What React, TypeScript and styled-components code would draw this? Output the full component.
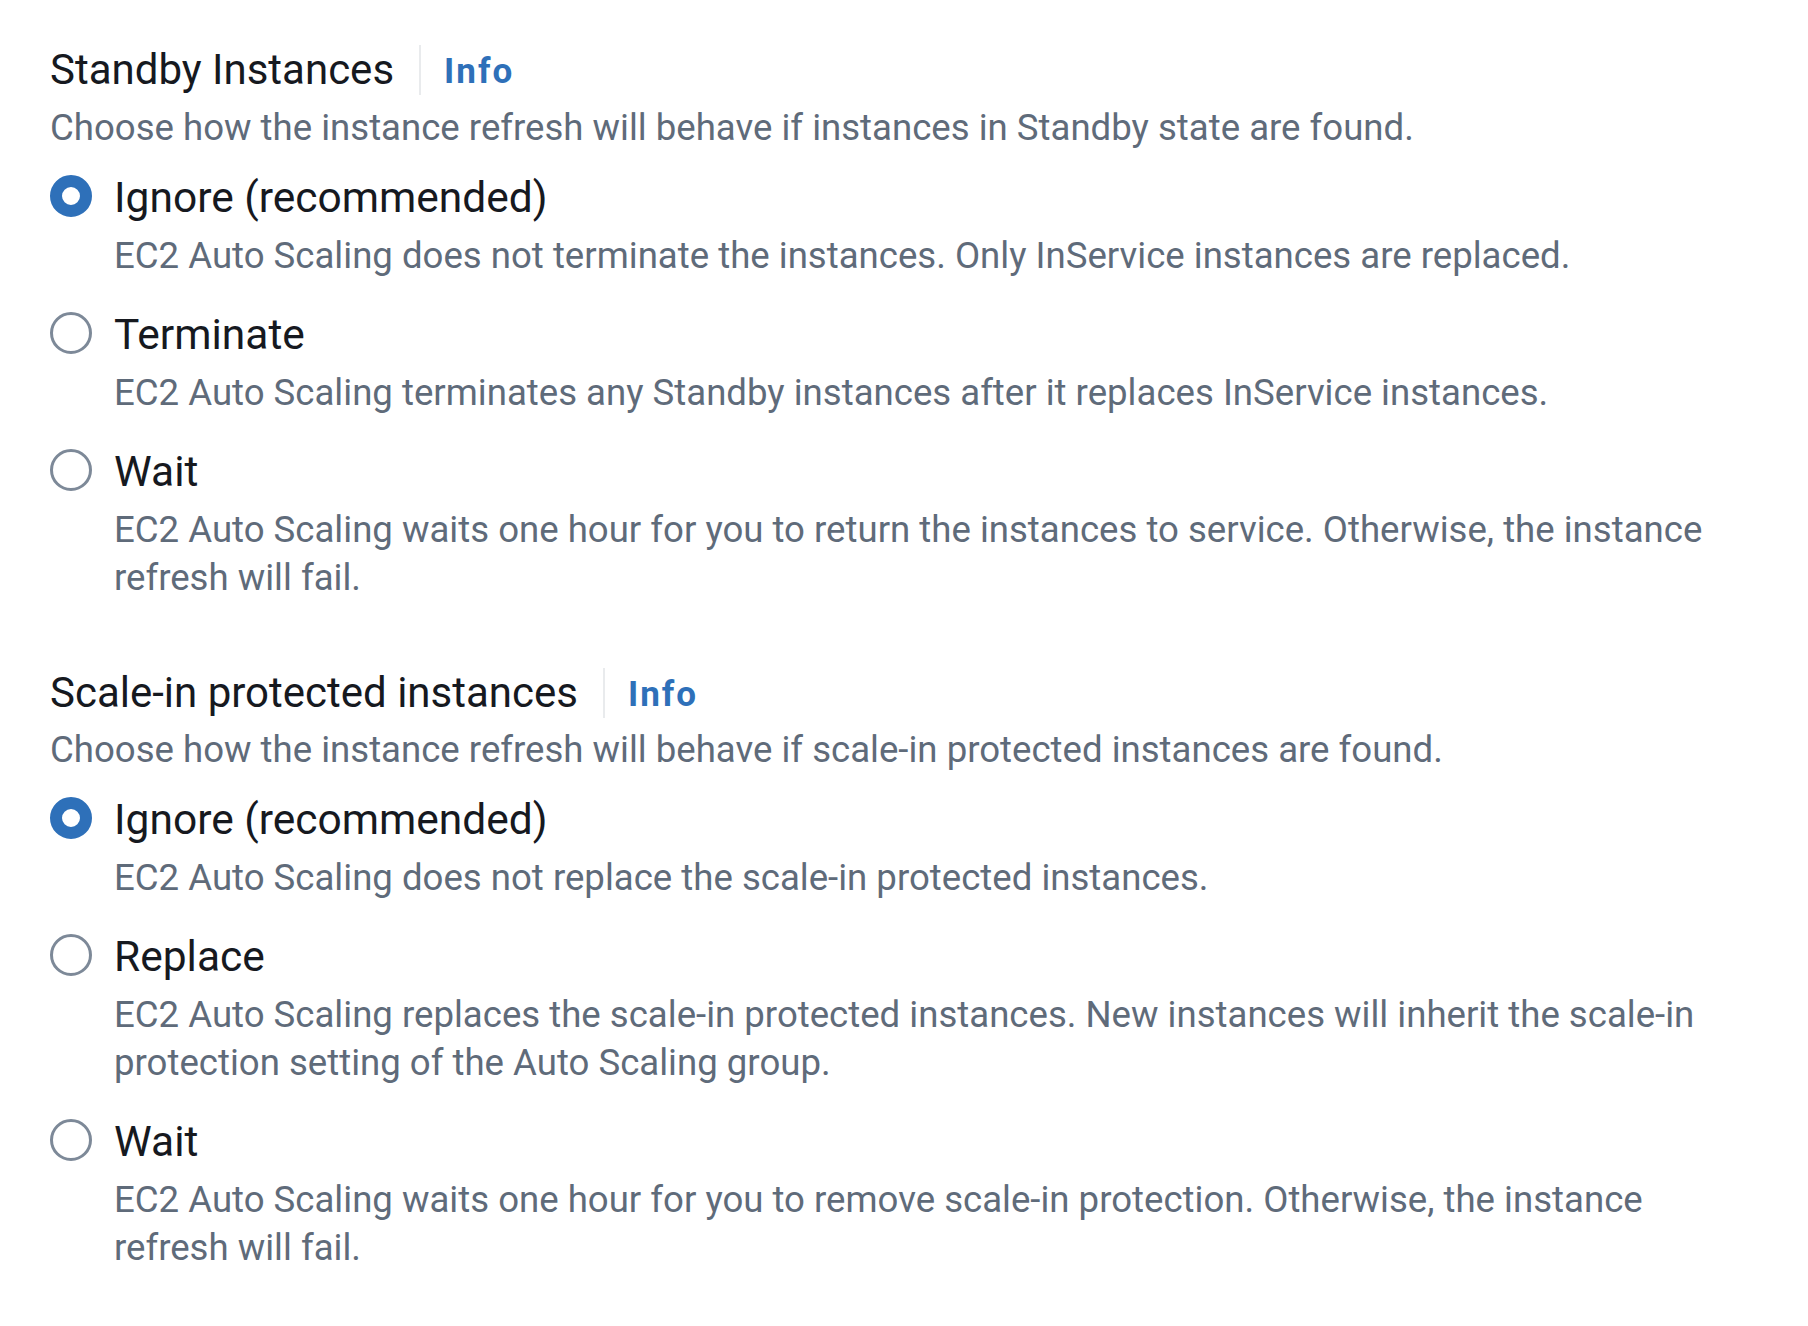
import React from "react";
import styled, { createGlobalStyle } from "styled-components";

const GlobalStyle = createGlobalStyle`
  html, body {
    margin: 0;
    padding: 0;
    background: #ffffff;
  }
  body {
    font-family: Roboto, "Liberation Sans", Arial, sans-serif;
    -webkit-font-smoothing: antialiased;
  }
`;

const Page = styled.div`
  padding: 45px 50px 40px 50px;
  display: flex;
  flex-direction: column;
  gap: 66px;
`;

const Section = styled.section`
  display: flex;
  flex-direction: column;
`;

const HeaderRow = styled.div`
  display: flex;
  align-items: center;
  height: 50px;
`;

const Heading = styled.h2`
  margin: 0;
  font-size: 42px;
  line-height: 50px;
  font-weight: 400;
  color: #16191f;
`;

const Divider = styled.span`
  display: block;
  width: 2px;
  height: 50px;
  background: #e9ebed;
  margin-left: 25px;
`;

const InfoLink = styled.a`
  padding: 4px 0 0 23px;
  font-size: 35px;
  line-height: 50px;
  font-weight: 700;
  letter-spacing: 2px;
  color: #2e70b9;
  text-decoration: none;
  cursor: pointer;
`;

const SectionDescription = styled.p`
  margin: 8.5px 0 0 0;
  font-size: 36.6px;
  line-height: 48px;
  color: #5f6b7a;
`;

const OptionList = styled.div`
  margin-top: 18px;
  display: flex;
  flex-direction: column;
  gap: 27px;
`;

const Option = styled.label`
  display: flex;
  align-items: flex-start;
  gap: 22px;
  cursor: pointer;
`;

const RadioCircle = styled.span<{ $checked: boolean }>`
  flex: none;
  box-sizing: border-box;
  width: 42px;
  height: 42px;
  margin-top: 5px;
  border-radius: 50%;
  background: #ffffff;
  border: ${(p) => (p.$checked ? "12.5px solid #2e70b9" : "3.5px solid #7d8998")};
`;

const OptionText = styled.div`
  display: flex;
  flex-direction: column;
  min-width: 0;
`;

const OptionLabel = styled.span`
  font-size: 42.5px;
  line-height: 56px;
  color: #16191f;
`;

const OptionDescription = styled.span`
  margin-top: 6px;
  font-size: 36.6px;
  line-height: 48px;
  color: #5f6b7a;
`;

type Choice = { label: string; description: string };

type Group = {
  title: string;
  description: string;
  choices: Choice[];
  selected: number;
};

const groups: Group[] = [
  {
    title: "Standby Instances",
    description:
      "Choose how the instance refresh will behave if instances in Standby state are found.",
    selected: 0,
    choices: [
      {
        label: "Ignore (recommended)",
        description:
          "EC2 Auto Scaling does not terminate the instances. Only InService instances are replaced.",
      },
      {
        label: "Terminate",
        description:
          "EC2 Auto Scaling terminates any Standby instances after it replaces InService instances.",
      },
      {
        label: "Wait",
        description:
          "EC2 Auto Scaling waits one hour for you to return the instances to service. Otherwise, the instance refresh will fail.",
      },
    ],
  },
  {
    title: "Scale-in protected instances",
    description:
      "Choose how the instance refresh will behave if scale-in protected instances are found.",
    selected: 0,
    choices: [
      {
        label: "Ignore (recommended)",
        description:
          "EC2 Auto Scaling does not replace the scale-in protected instances.",
      },
      {
        label: "Replace",
        description:
          "EC2 Auto Scaling replaces the scale-in protected instances. New instances will inherit the scale-in protection setting of the Auto Scaling group.",
      },
      {
        label: "Wait",
        description:
          "EC2 Auto Scaling waits one hour for you to remove scale-in protection. Otherwise, the instance refresh will fail.",
      },
    ],
  },
];

function RadioGroup({ group }: { group: Group }) {
  const [selected, setSelected] = React.useState(group.selected);
  return (
    <Section>
      <HeaderRow>
        <Heading>{group.title}</Heading>
        <Divider />
        <InfoLink>Info</InfoLink>
      </HeaderRow>
      <SectionDescription>{group.description}</SectionDescription>
      <OptionList role="radiogroup">
        {group.choices.map((c, i) => (
          <Option key={c.label} onClick={() => setSelected(i)}>
            <RadioCircle $checked={selected === i} role="radio" aria-checked={selected === i} />
            <OptionText>
              <OptionLabel>{c.label}</OptionLabel>
              <OptionDescription>{c.description}</OptionDescription>
            </OptionText>
          </Option>
        ))}
      </OptionList>
    </Section>
  );
}

export default function App() {
  return (
    <>
      <GlobalStyle />
      <Page>
        {groups.map((g) => (
          <RadioGroup key={g.title} group={g} />
        ))}
      </Page>
    </>
  );
}
